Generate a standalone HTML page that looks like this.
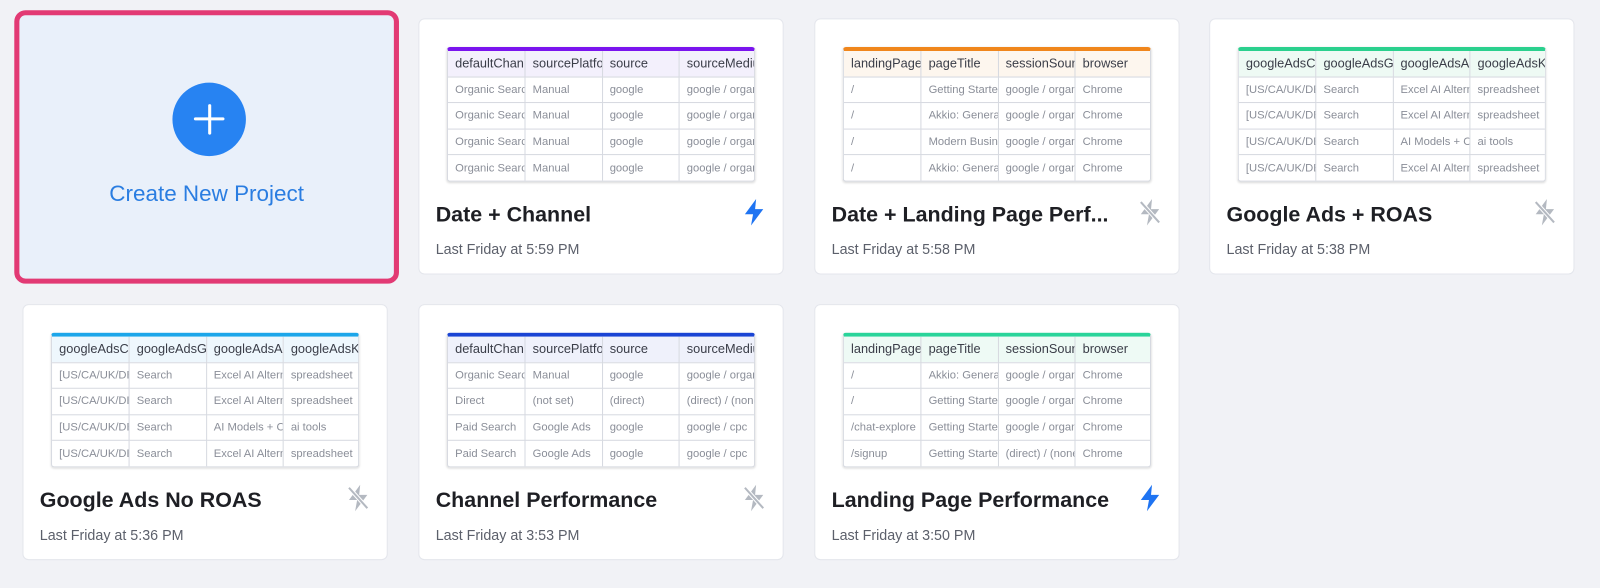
<!DOCTYPE html>
<html><head><meta charset="utf-8"><style>
*{box-sizing:border-box;margin:0;padding:0}
body{width:1600px;height:588px;background:#f1f2f6;font-family:"Liberation Sans",sans-serif;position:relative;overflow:hidden}
#w{position:absolute;left:0;top:0;width:1568px;height:576px;transform:scale(1.0204);transform-origin:0 0}
.card{position:absolute;width:358px;height:251px;background:#fff;border:1px solid #e4e6ec;border-radius:6px}
.tbl{position:absolute;left:27px;top:27px;width:302px;border-radius:3px;overflow:hidden;box-shadow:0 1px 2px rgba(0,0,0,.15);border:1px solid #d6d9e0;border-top:4px solid var(--c)}
.tbl table{border-collapse:collapse;width:302px;table-layout:fixed}
.tbl td{height:25.5px;border-right:1px solid #d6d9e0;border-bottom:1px solid #d6d9e0;font-size:11px;color:#8a8e98;padding-left:7px;white-space:nowrap;overflow:hidden}
.tbl tr:first-child td{height:25px;font-size:12.5px;color:#3a3d48;background:var(--h)}
.tbl tr:last-child td{border-bottom:none}
.tbl td:last-child{border-right:none}
.t{position:absolute;left:16px;top:180px;font-size:21px;font-weight:bold;color:#1e1f24}
.d{position:absolute;left:16px;top:217px;font-size:14px;color:#5c606b}
.ic{position:absolute;left:316px;top:175px}
</style></head><body><div id="w">
<div style="position:absolute;left:14px;top:10px;width:377px;height:268px;border:5px solid #e23a74;border-radius:11px;background:#e9f0fa">
<div style="position:absolute;left:150px;top:66px;width:72px;height:72px;border-radius:50%;background:#2783f2"></div>
<div style="position:absolute;left:171px;top:100px;width:30px;height:3px;background:#fff;border-radius:2px"></div>
<div style="position:absolute;left:184.5px;top:87px;width:3px;height:30px;background:#fff;border-radius:2px"></div>
<div style="position:absolute;left:0;width:367px;top:162px;text-align:center;font-size:22px;color:#2a7de1">Create New Project</div>
</div>

<div class="card" style="left:410px;top:18px">
<div class="tbl" style="--c:#7a14ee;--h:#f3f0fc"><table>
<tr><td>defaultChannel</td><td>sourcePlatform</td><td>source</td><td>sourceMedium</td></tr>
<tr><td>Organic Search</td><td>Manual</td><td>google</td><td>google / organic</td></tr>
<tr><td>Organic Search</td><td>Manual</td><td>google</td><td>google / organic</td></tr>
<tr><td>Organic Search</td><td>Manual</td><td>google</td><td>google / organic</td></tr>
<tr><td>Organic Search</td><td>Manual</td><td>google</td><td>google / organic</td></tr>
</table></div>
<div class="t">Date + Channel</div><div class="d">Last Friday at 5:59 PM</div>
<svg class="ic" width="24" height="28" viewBox="0 0 24 28"><path d="M14 1 L3 16 H11 L9 27 L21 11 H13 Z" fill="#1f74f2"/></svg>
</div>

<div class="card" style="left:798px;top:18px">
<div class="tbl" style="--c:#f0861c;--h:#fdf6ee"><table>
<tr><td>landingPage</td><td>pageTitle</td><td>sessionSource</td><td>browser</td></tr>
<tr><td>/</td><td>Getting Started</td><td>google / organic</td><td>Chrome</td></tr>
<tr><td>/</td><td>Akkio: Generative</td><td>google / organic</td><td>Chrome</td></tr>
<tr><td>/</td><td>Modern Business</td><td>google / organic</td><td>Chrome</td></tr>
<tr><td>/</td><td>Akkio: Generative</td><td>google / organic</td><td>Chrome</td></tr>
</table></div>
<div class="t">Date + Landing Page Perf...</div><div class="d">Last Friday at 5:58 PM</div>
<svg class="ic" width="24" height="28" viewBox="0 0 24 28"><path d="M14 1 L3 16 H11 L9 27 L21 11 H13 Z" fill="#b4b9c1"/><path d="M3 4 L21 24" stroke="#fff" stroke-width="4"/><path d="M3 4 L21 24" stroke="#b4b9c1" stroke-width="2"/></svg>
</div>

<div class="card" style="left:1185px;top:18px">
<div class="tbl" style="--c:#2bd08e;--h:#eefaf4"><table>
<tr><td>googleAdsCampaign</td><td>googleAdsGroup</td><td>googleAdsAd</td><td>googleAdsKeyword</td></tr>
<tr><td>[US/CA/UK/DE]</td><td>Search</td><td>Excel AI Alternative</td><td>spreadsheet</td></tr>
<tr><td>[US/CA/UK/DE]</td><td>Search</td><td>Excel AI Alternative</td><td>spreadsheet</td></tr>
<tr><td>[US/CA/UK/DE]</td><td>Search</td><td>AI Models + Co</td><td>ai tools</td></tr>
<tr><td>[US/CA/UK/DE]</td><td>Search</td><td>Excel AI Alternative</td><td>spreadsheet</td></tr>
</table></div>
<div class="t">Google Ads + ROAS</div><div class="d">Last Friday at 5:38 PM</div>
<svg class="ic" width="24" height="28" viewBox="0 0 24 28"><path d="M14 1 L3 16 H11 L9 27 L21 11 H13 Z" fill="#b4b9c1"/><path d="M3 4 L21 24" stroke="#fff" stroke-width="4"/><path d="M3 4 L21 24" stroke="#b4b9c1" stroke-width="2"/></svg>
</div>

<div class="card" style="left:22px;top:298px">
<div class="tbl" style="--c:#1ca6ea;--h:#eef7fd"><table>
<tr><td>googleAdsCampaign</td><td>googleAdsGroup</td><td>googleAdsAd</td><td>googleAdsKeyword</td></tr>
<tr><td>[US/CA/UK/DE]</td><td>Search</td><td>Excel AI Alternative</td><td>spreadsheet</td></tr>
<tr><td>[US/CA/UK/DE]</td><td>Search</td><td>Excel AI Alternative</td><td>spreadsheet</td></tr>
<tr><td>[US/CA/UK/DE]</td><td>Search</td><td>AI Models + Co</td><td>ai tools</td></tr>
<tr><td>[US/CA/UK/DE]</td><td>Search</td><td>Excel AI Alternative</td><td>spreadsheet</td></tr>
</table></div>
<div class="t">Google Ads No ROAS</div><div class="d">Last Friday at 5:36 PM</div>
<svg class="ic" width="24" height="28" viewBox="0 0 24 28"><path d="M14 1 L3 16 H11 L9 27 L21 11 H13 Z" fill="#b4b9c1"/><path d="M3 4 L21 24" stroke="#fff" stroke-width="4"/><path d="M3 4 L21 24" stroke="#b4b9c1" stroke-width="2"/></svg>
</div>

<div class="card" style="left:410px;top:298px">
<div class="tbl" style="--c:#1a44d4;--h:#eff1fb"><table>
<tr><td>defaultChannel</td><td>sourcePlatform</td><td>source</td><td>sourceMedium</td></tr>
<tr><td>Organic Search</td><td>Manual</td><td>google</td><td>google / organic</td></tr>
<tr><td>Direct</td><td>(not set)</td><td>(direct)</td><td>(direct) / (none)</td></tr>
<tr><td>Paid Search</td><td>Google Ads</td><td>google</td><td>google / cpc</td></tr>
<tr><td>Paid Search</td><td>Google Ads</td><td>google</td><td>google / cpc</td></tr>
</table></div>
<div class="t">Channel Performance</div><div class="d">Last Friday at 3:53 PM</div>
<svg class="ic" width="24" height="28" viewBox="0 0 24 28"><path d="M14 1 L3 16 H11 L9 27 L21 11 H13 Z" fill="#b4b9c1"/><path d="M3 4 L21 24" stroke="#fff" stroke-width="4"/><path d="M3 4 L21 24" stroke="#b4b9c1" stroke-width="2"/></svg>
</div>

<div class="card" style="left:798px;top:298px">
<div class="tbl" style="--c:#2ad49a;--h:#eefaf5"><table>
<tr><td>landingPage</td><td>pageTitle</td><td>sessionSource</td><td>browser</td></tr>
<tr><td>/</td><td>Akkio: Generative</td><td>google / organic</td><td>Chrome</td></tr>
<tr><td>/</td><td>Getting Started</td><td>google / organic</td><td>Chrome</td></tr>
<tr><td>/chat-explore</td><td>Getting Started</td><td>google / organic</td><td>Chrome</td></tr>
<tr><td>/signup</td><td>Getting Started</td><td>(direct) / (none)</td><td>Chrome</td></tr>
</table></div>
<div class="t">Landing Page Performance</div><div class="d">Last Friday at 3:50 PM</div>
<svg class="ic" width="24" height="28" viewBox="0 0 24 28"><path d="M14 1 L3 16 H11 L9 27 L21 11 H13 Z" fill="#1f74f2"/></svg>
</div>
</div></body></html>
